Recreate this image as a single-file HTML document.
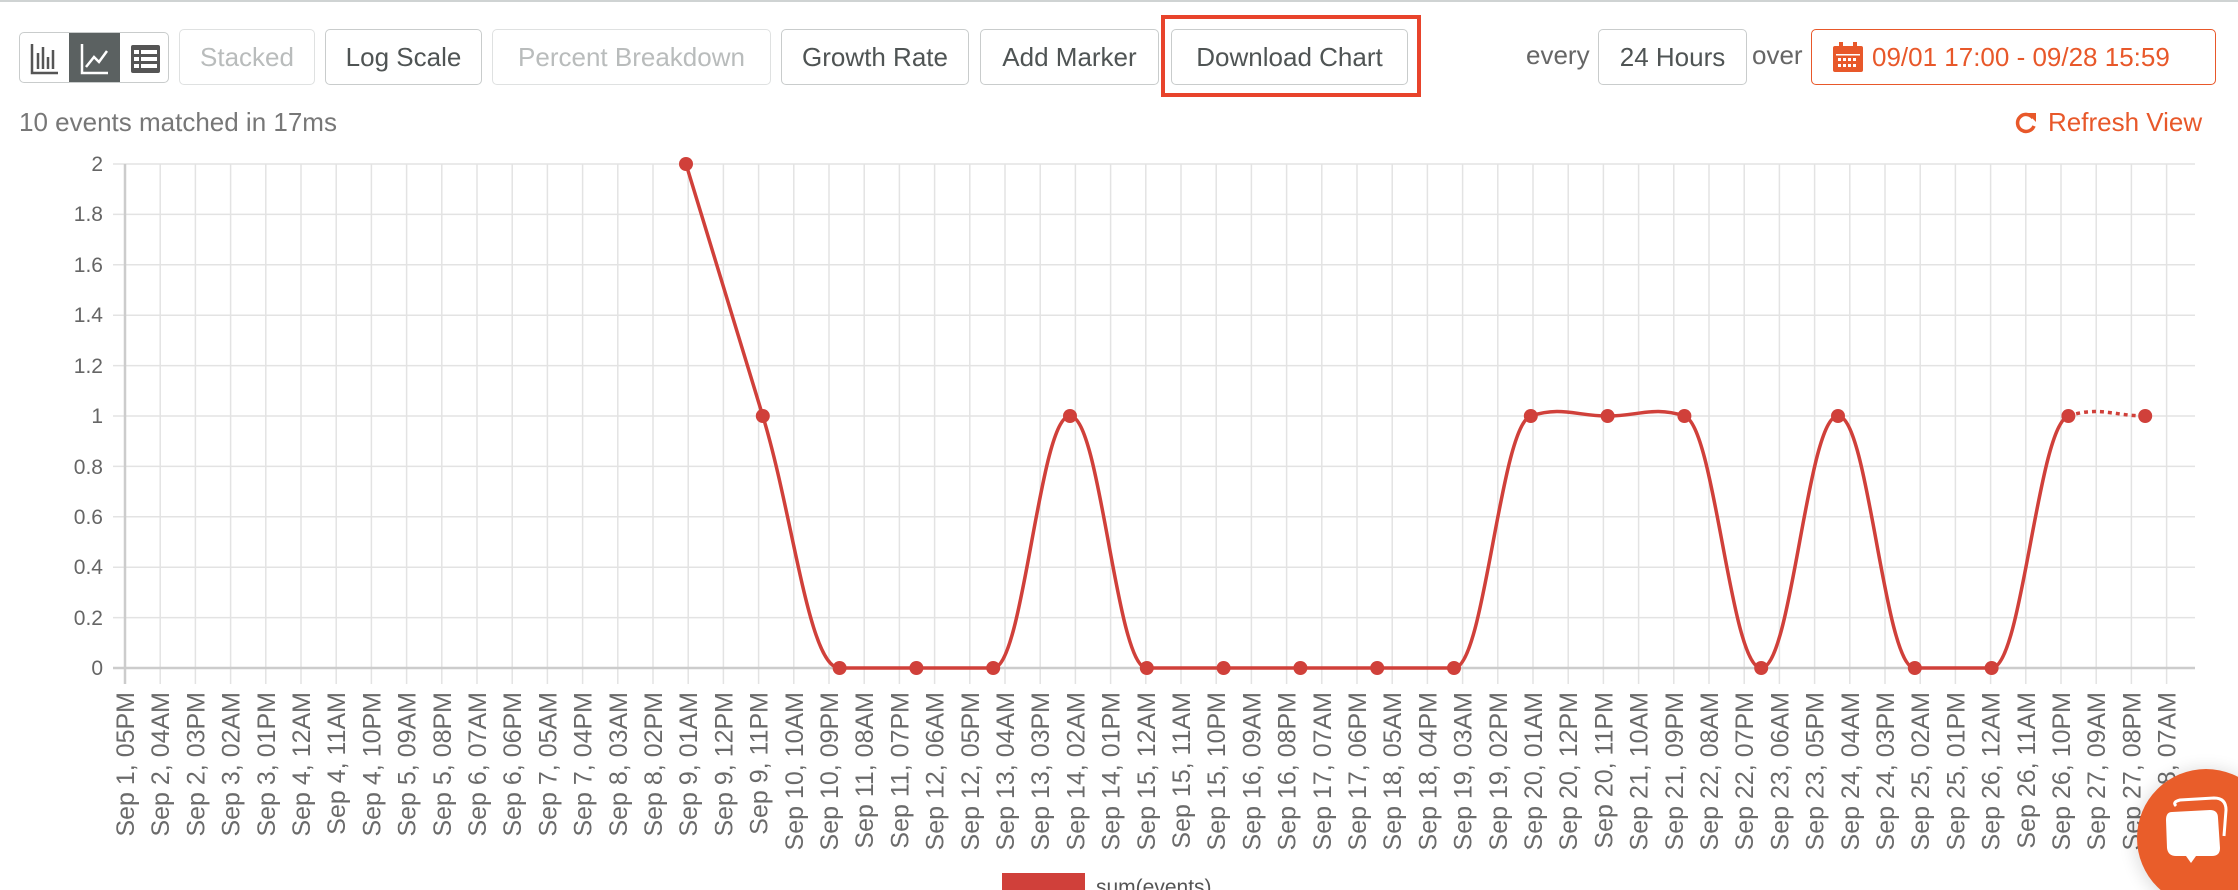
<!DOCTYPE html>
<html><head><meta charset="utf-8"><style>
body{margin:0;width:2238px;height:890px;overflow:hidden;background:#fff;font-family:"Liberation Sans",Arial,sans-serif;position:relative}
.topline{position:absolute;left:0;top:0;width:2238px;height:2px;background:#cfd3d3}
.btn{position:absolute;top:29px;height:56px;border:1.5px solid #c9cccc;border-radius:5px;box-sizing:border-box;display:flex;align-items:center;justify-content:center;font-size:26px;color:#4f5454;background:#fff}
.dis{color:#b9bcbc;border-color:#dfe1e1}
.lbl{position:absolute;top:40px;font-size:26px;color:#666}
</style></head><body>
<div class="topline"></div>
<div style="position:absolute;left:19px;top:32px;width:150px;height:51px;border:1.5px solid #c9cccc;border-radius:5px;box-sizing:border-box;overflow:hidden">
 <div style="position:absolute;left:49px;top:0;width:51px;height:51px;background:#5b6161"></div>
 <svg width="150" height="51" style="position:absolute;left:0;top:0">
  <g stroke="#555" stroke-width="2.5" fill="none"><path d="M12 11V40H38"/><path d="M18 36V20M23 36V14M28 36V24M33 36V17"/></g>
  <g stroke="#fff" stroke-width="2.5" fill="none"><path d="M62 11V40H88"/><path d="M66 34L74 24L79 29L87 18"/></g>
  <g fill="#555"><rect x="111" y="12" width="29" height="28" rx="2"/></g>
  <g fill="#fff"><rect x="114" y="17" width="5" height="4"/><rect x="121" y="17" width="16" height="4"/><rect x="114" y="24" width="5" height="4"/><rect x="121" y="24" width="16" height="4"/><rect x="114" y="31" width="5" height="4"/><rect x="121" y="31" width="16" height="4"/></g>
 </svg>
</div>
<div class="btn dis" style="left:179px;width:136px">Stacked</div>
<div class="btn" style="left:325px;width:157px">Log Scale</div>
<div class="btn dis" style="left:492px;width:279px">Percent Breakdown</div>
<div class="btn" style="left:781px;width:188px">Growth Rate</div>
<div class="btn" style="left:980px;width:179px">Add Marker</div>
<div style="position:absolute;left:1161px;top:15px;width:260px;height:82px;border:4.5px solid #e8432b;box-sizing:border-box"></div>
<div class="btn" style="left:1171px;width:237px">Download Chart</div>
<div class="lbl" style="left:1526px">every</div>
<div class="btn" style="left:1598px;width:149px">24 Hours</div>
<div class="lbl" style="left:1752px">over</div>
<div class="btn" style="left:1811px;width:405px;border-color:#e8582a;color:#e8582a;justify-content:flex-start;padding-left:20px">
 <svg width="32" height="32" style="margin-right:8px"><rect x="1" y="5" width="30" height="26" rx="2" fill="#e8582a"/><rect x="7" y="1" width="4" height="7" fill="#e8582a"/><rect x="21" y="1" width="4" height="7" fill="#e8582a"/><g fill="#fff"><rect x="4" y="13" width="24" height="1.5"/><rect x="6" y="17" width="3" height="3"/><rect x="11" y="17" width="3" height="3"/><rect x="16" y="17" width="3" height="3"/><rect x="21" y="17" width="3" height="3"/><rect x="6" y="23" width="3" height="3"/><rect x="11" y="23" width="3" height="3"/><rect x="16" y="23" width="3" height="3"/><rect x="21" y="23" width="3" height="3"/></g></svg>09/01 17:00 - 09/28 15:59</div>
<div style="position:absolute;left:19px;top:107px;font-size:26px;color:#777">10 events matched in 17ms</div>
<div style="position:absolute;left:2014px;top:107px;font-size:26px;color:#e8582a"><svg width="24" height="24" style="vertical-align:-3px;margin-right:10px"><path d="M19 8A8.5 8.5 0 1 0 20 16" stroke="#e8582a" stroke-width="3.5" fill="none"/><path d="M13 3L22 3L22 12Z" fill="#e8582a"/></svg>Refresh View</div>

<svg width="2238" height="890" style="position:absolute;left:0;top:0" font-family="Liberation Sans, Arial, sans-serif">
<g stroke="#e3e3e3" stroke-width="1.5">
<path d="M113 164H2195M113 214.4H2195M113 264.8H2195M113 315.2H2195M113 365.6H2195M113 416H2195M113 466.4H2195M113 516.8H2195M113 567.2H2195M113 617.6H2195"/>
<path d="M160.2 164V684M195.4 164V684M230.6 164V684M265.8 164V684M301 164V684M336.2 164V684M371.4 164V684M406.6 164V684M441.8 164V684M477 164V684M512.2 164V684M547.4 164V684M582.6 164V684M617.8 164V684M653 164V684M688.2 164V684M723.4 164V684M758.6 164V684M793.8 164V684M829 164V684M864.2 164V684M899.4 164V684M934.6 164V684M969.8 164V684M1005 164V684M1040.2 164V684M1075.4 164V684M1110.6 164V684M1145.8 164V684M1181 164V684M1216.2 164V684M1251.4 164V684M1286.6 164V684M1321.8 164V684M1357 164V684M1392.2 164V684M1427.4 164V684M1462.6 164V684M1497.8 164V684M1533 164V684M1568.2 164V684M1603.4 164V684M1638.6 164V684M1673.8 164V684M1709 164V684M1744.2 164V684M1779.4 164V684M1814.6 164V684M1849.8 164V684M1885 164V684M1920.2 164V684M1955.4 164V684M1990.6 164V684M2025.8 164V684M2061 164V684M2096.2 164V684M2131.4 164V684M2166.6 164V684"/>
</g>
<path d="M125 164V684M113 668H2195" stroke="#cccccc" stroke-width="2.5"/>
<g font-size="21" fill="#666" text-anchor="end">
<text x="103" y="171">2</text><text x="103" y="221">1.8</text><text x="103" y="272">1.6</text><text x="103" y="322">1.4</text><text x="103" y="373">1.2</text><text x="103" y="423">1</text><text x="103" y="474">0.8</text><text x="103" y="524">0.6</text><text x="103" y="574">0.4</text><text x="103" y="625">0.2</text><text x="103" y="675">0</text>
</g>
<g stroke="#d0403a" stroke-width="3.5" fill="none">
<path d="M686,164 C686,164 732.1,315.2 762.8,416 C793.5,516.8 808.9,668 839.6,668 L993.2,668 C1023.9,668 1039.3,416 1070,416 C1100.7,416 1116.1,668 1146.8,668 L1454,668 C1484.7,668 1500.1,426.1 1530.8,416 C1561.5,405.9 1576.9,416 1607.6,416 C1638.3,416 1653.7,405.9 1684.4,416 C1715.1,426.1 1730.5,668 1761.2,668 C1791.9,668 1807.3,416 1838,416 C1868.7,416 1884.1,668 1914.8,668 L1991.6,668 C2022.3,668 2037.7,426.1 2068.4,416"/>
<path d="M2068.4,416 C2099.1,405.9 2114.5,416 2145.2,416" stroke-dasharray="4,4"/>
</g>
<g fill="#d0403a">
<circle cx="686" cy="164" r="7"/><circle cx="762.8" cy="416" r="7"/><circle cx="839.6" cy="668" r="7"/><circle cx="916.4" cy="668" r="7"/><circle cx="993.2" cy="668" r="7"/><circle cx="1070" cy="416" r="7"/><circle cx="1146.8" cy="668" r="7"/><circle cx="1223.6" cy="668" r="7"/><circle cx="1300.4" cy="668" r="7"/><circle cx="1377.2" cy="668" r="7"/><circle cx="1454" cy="668" r="7"/><circle cx="1530.8" cy="416" r="7"/><circle cx="1607.6" cy="416" r="7"/><circle cx="1684.4" cy="416" r="7"/><circle cx="1761.2" cy="668" r="7"/><circle cx="1838" cy="416" r="7"/><circle cx="1914.8" cy="668" r="7"/><circle cx="1991.6" cy="668" r="7"/><circle cx="2068.4" cy="416" r="7"/><circle cx="2145.2" cy="416" r="7"/>
</g>
<g font-size="25" fill="#6a6a6a" text-anchor="end">
<text transform="translate(134,692) rotate(-90)">Sep 1, 05PM</text>
<text transform="translate(169.2,692) rotate(-90)">Sep 2, 04AM</text>
<text transform="translate(204.4,692) rotate(-90)">Sep 2, 03PM</text>
<text transform="translate(239.6,692) rotate(-90)">Sep 3, 02AM</text>
<text transform="translate(274.8,692) rotate(-90)">Sep 3, 01PM</text>
<text transform="translate(310,692) rotate(-90)">Sep 4, 12AM</text>
<text transform="translate(345.2,692) rotate(-90)">Sep 4, 11AM</text>
<text transform="translate(380.4,692) rotate(-90)">Sep 4, 10PM</text>
<text transform="translate(415.6,692) rotate(-90)">Sep 5, 09AM</text>
<text transform="translate(450.8,692) rotate(-90)">Sep 5, 08PM</text>
<text transform="translate(486,692) rotate(-90)">Sep 6, 07AM</text>
<text transform="translate(521.2,692) rotate(-90)">Sep 6, 06PM</text>
<text transform="translate(556.4,692) rotate(-90)">Sep 7, 05AM</text>
<text transform="translate(591.6,692) rotate(-90)">Sep 7, 04PM</text>
<text transform="translate(626.8,692) rotate(-90)">Sep 8, 03AM</text>
<text transform="translate(662,692) rotate(-90)">Sep 8, 02PM</text>
<text transform="translate(697.2,692) rotate(-90)">Sep 9, 01AM</text>
<text transform="translate(732.4,692) rotate(-90)">Sep 9, 12PM</text>
<text transform="translate(767.6,692) rotate(-90)">Sep 9, 11PM</text>
<text transform="translate(802.8,692) rotate(-90)">Sep 10, 10AM</text>
<text transform="translate(838,692) rotate(-90)">Sep 10, 09PM</text>
<text transform="translate(873.2,692) rotate(-90)">Sep 11, 08AM</text>
<text transform="translate(908.4,692) rotate(-90)">Sep 11, 07PM</text>
<text transform="translate(943.6,692) rotate(-90)">Sep 12, 06AM</text>
<text transform="translate(978.8,692) rotate(-90)">Sep 12, 05PM</text>
<text transform="translate(1014,692) rotate(-90)">Sep 13, 04AM</text>
<text transform="translate(1049.2,692) rotate(-90)">Sep 13, 03PM</text>
<text transform="translate(1084.4,692) rotate(-90)">Sep 14, 02AM</text>
<text transform="translate(1119.6,692) rotate(-90)">Sep 14, 01PM</text>
<text transform="translate(1154.8,692) rotate(-90)">Sep 15, 12AM</text>
<text transform="translate(1190,692) rotate(-90)">Sep 15, 11AM</text>
<text transform="translate(1225.2,692) rotate(-90)">Sep 15, 10PM</text>
<text transform="translate(1260.4,692) rotate(-90)">Sep 16, 09AM</text>
<text transform="translate(1295.6,692) rotate(-90)">Sep 16, 08PM</text>
<text transform="translate(1330.8,692) rotate(-90)">Sep 17, 07AM</text>
<text transform="translate(1366,692) rotate(-90)">Sep 17, 06PM</text>
<text transform="translate(1401.2,692) rotate(-90)">Sep 18, 05AM</text>
<text transform="translate(1436.4,692) rotate(-90)">Sep 18, 04PM</text>
<text transform="translate(1471.6,692) rotate(-90)">Sep 19, 03AM</text>
<text transform="translate(1506.8,692) rotate(-90)">Sep 19, 02PM</text>
<text transform="translate(1542,692) rotate(-90)">Sep 20, 01AM</text>
<text transform="translate(1577.2,692) rotate(-90)">Sep 20, 12PM</text>
<text transform="translate(1612.4,692) rotate(-90)">Sep 20, 11PM</text>
<text transform="translate(1647.6,692) rotate(-90)">Sep 21, 10AM</text>
<text transform="translate(1682.8,692) rotate(-90)">Sep 21, 09PM</text>
<text transform="translate(1718,692) rotate(-90)">Sep 22, 08AM</text>
<text transform="translate(1753.2,692) rotate(-90)">Sep 22, 07PM</text>
<text transform="translate(1788.4,692) rotate(-90)">Sep 23, 06AM</text>
<text transform="translate(1823.6,692) rotate(-90)">Sep 23, 05PM</text>
<text transform="translate(1858.8,692) rotate(-90)">Sep 24, 04AM</text>
<text transform="translate(1894,692) rotate(-90)">Sep 24, 03PM</text>
<text transform="translate(1929.2,692) rotate(-90)">Sep 25, 02AM</text>
<text transform="translate(1964.4,692) rotate(-90)">Sep 25, 01PM</text>
<text transform="translate(1999.6,692) rotate(-90)">Sep 26, 12AM</text>
<text transform="translate(2034.8,692) rotate(-90)">Sep 26, 11AM</text>
<text transform="translate(2070,692) rotate(-90)">Sep 26, 10PM</text>
<text transform="translate(2105.2,692) rotate(-90)">Sep 27, 09AM</text>
<text transform="translate(2140.4,692) rotate(-90)">Sep 27, 08PM</text>
<text transform="translate(2175.6,692) rotate(-90)">Sep 28, 07AM</text>
</g>
<rect x="1002" y="873" width="83" height="20" fill="#d0403a"/>
<text x="1096" y="894" font-size="21" fill="#555">sum(events)</text>
<defs><filter id="sh" x="-50%" y="-50%" width="200%" height="200%"><feGaussianBlur stdDeviation="8"/></filter></defs>
<circle cx="2206" cy="840" r="72" fill="#000" opacity="0.12" filter="url(#sh)"/>
<circle cx="2206" cy="838" r="69" fill="#e95d2a"/>
<path d="M2176 806 Q2172 802 2180 800 L2214 798 Q2226 798 2226 810 L2224 836" stroke="#fff" stroke-width="3" fill="none"/>
<path d="M2172 812 Q2166 812 2166 820 L2167 848 Q2168 856 2176 856 L2186 856 L2191 863 L2196 856 L2212 856 Q2220 856 2220 848 L2218 818 Q2218 810 2210 810 Z" fill="#fff"/>
</svg>
</body></html>
